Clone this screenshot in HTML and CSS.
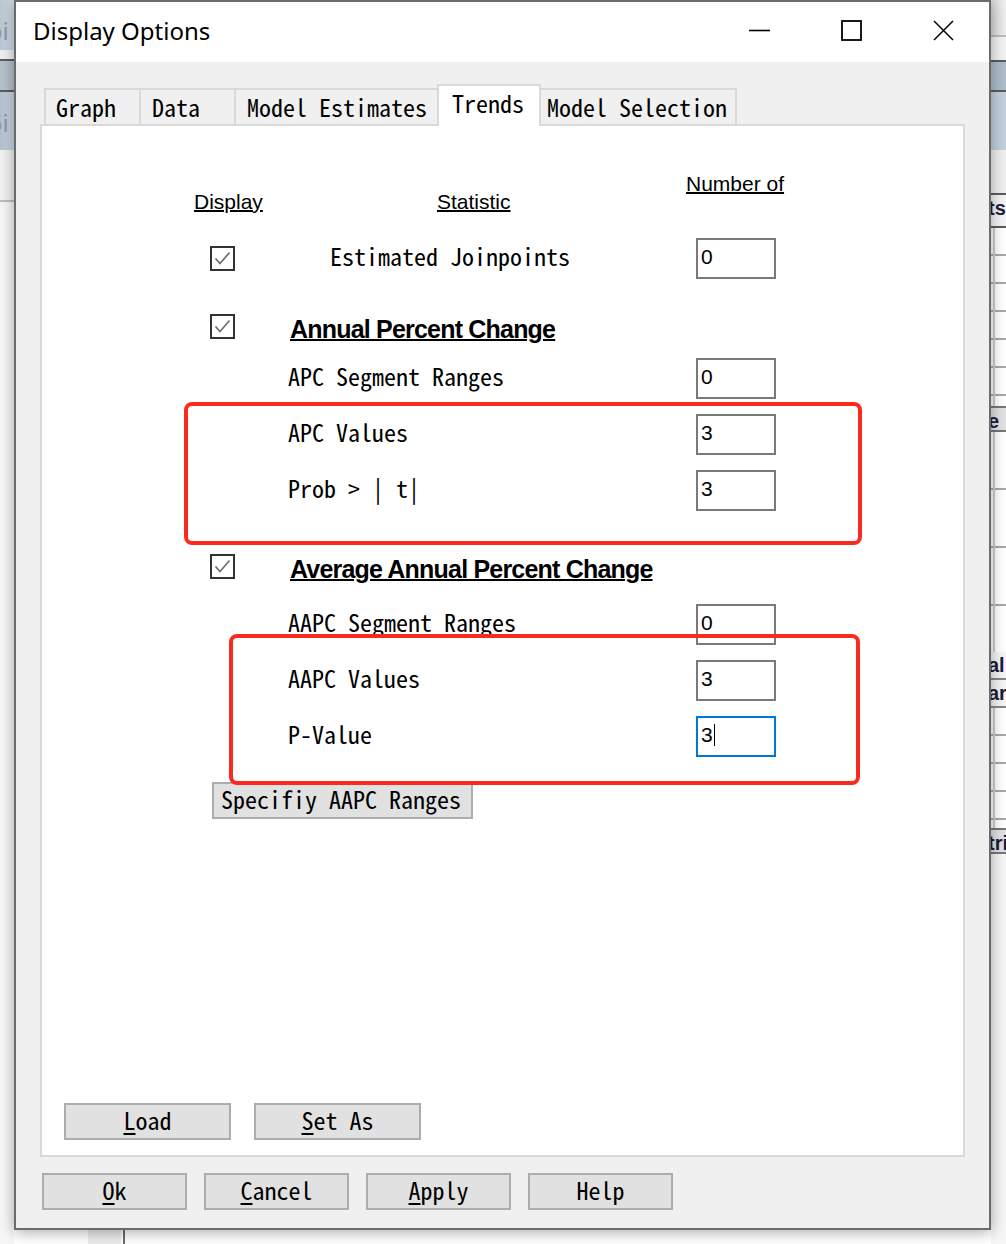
FILE: index.html
```html
<!DOCTYPE html>
<html lang="en">
<head>
    <meta charset="UTF-8">
    <meta name="viewport" content="width=device-width, initial-scale=1.0">
    <link rel="stylesheet" href="styles.css">
    <title>Display Options</title>
</head>
<body>
    <div class="desk">
        <div class="bg-left">
            <div class="strip sl1"><span class="frag">oi</span></div>
            <div class="strip sl2"></div>
            <div class="strip line"></div>
            <div class="strip sl3"></div>
            <div class="strip line"></div>
            <div class="strip sl4"><span class="frag">oi</span></div>
            <div class="strip sl5"></div>
            <div class="strip line-light"></div>
        </div>

        <div class="window">
            <div class="titlebar">
                <span class="title">Display Options</span>
                <div class="caption">
                    <span class="cap">
                        <svg width="21" height="21" viewBox="0 0 21 21"><path d="M0 10.5H21" stroke="#000" stroke-width="1.6"/></svg>
                    </span>
                    <span class="cap">
                        <svg width="21" height="21" viewBox="0 0 21 21"><rect x="1" y="1" width="19" height="19" fill="none" stroke="#000" stroke-width="1.8"/></svg>
                    </span>
                    <span class="cap">
                        <svg width="21" height="21" viewBox="0 0 21 21"><path d="M1 1L20 20M20 1L1 20" stroke="#000" stroke-width="1.5"/></svg>
                    </span>
                </div>
            </div>

            <div class="client">
                <div class="tabs">
                    <div class="tab tab-graph">Graph</div>
                    <div class="tab tab-data">Data</div>
                    <div class="tab tab-est">Model Estimates</div>
                    <div class="tab tab-trends active">Trends</div>
                    <div class="tab tab-sel">Model Selection</div>
                </div>

                <div class="panel">
                    <div class="form">
                        <div class="row head">
                            <span class="hdr">Display</span>
                            <span class="hdr hdr-stat">Statistic</span>
                            <span class="hdr hdr-num">Number of</span>
                        </div>

                        <div class="row first">
                            <span class="check"><svg width="25" height="25" viewBox="0 0 25 25"><rect x="1" y="1" width="23" height="23" fill="#fff" stroke="#333" stroke-width="2"/><path d="M5.5 12.5L10 17.5L19.5 6.5" fill="none" stroke="#6e6e6e" stroke-width="1.7"/></svg></span>
                            <span class="label label-indent">Estimated Joinpoints</span>
                            <span class="field">0</span>
                        </div>

                        <div class="row section">
                            <span class="check"><svg width="25" height="25" viewBox="0 0 25 25"><rect x="1" y="1" width="23" height="23" fill="#fff" stroke="#333" stroke-width="2"/><path d="M5.5 12.5L10 17.5L19.5 6.5" fill="none" stroke="#6e6e6e" stroke-width="1.7"/></svg></span>
                            <span class="sec-title">Annual Percent Change</span>
                        </div>
                        <div class="row after-sec">
                            <span class="label">APC Segment Ranges</span>
                            <span class="field">0</span>
                        </div>
                        <div class="row">
                            <span class="label">APC Values</span>
                            <span class="field">3</span>
                        </div>
                        <div class="row">
                            <span class="label">Prob &gt; | t|</span>
                            <span class="field">3</span>
                        </div>

                        <div class="row section section-aapc">
                            <span class="check"><svg width="25" height="25" viewBox="0 0 25 25"><rect x="1" y="1" width="23" height="23" fill="#fff" stroke="#333" stroke-width="2"/><path d="M5.5 12.5L10 17.5L19.5 6.5" fill="none" stroke="#6e6e6e" stroke-width="1.7"/></svg></span>
                            <span class="sec-title">Average Annual Percent Change</span>
                        </div>
                        <div class="row after-sec2">
                            <span class="label">AAPC Segment Ranges</span>
                            <span class="field">0</span>
                        </div>
                        <div class="row">
                            <span class="label">AAPC Values</span>
                            <span class="field">3</span>
                        </div>
                        <div class="row">
                            <span class="label">P-Value</span>
                            <span class="field focus">3<span class="caret"></span></span>
                        </div>

                        <div class="btn btn-specify">Specifiy AAPC Ranges</div>
                    </div>

                    <div class="panel-buttons">
                        <div class="btn btn-panel"><u>L</u>oad</div>
                        <div class="btn btn-panel"><u>S</u>et As</div>
                    </div>

                    <!-- red highlight boxes drawn over the form -->
                    <div class="mark mark-apc"></div>
                    <div class="mark mark-aapc"></div>
                </div>

                <div class="dialog-buttons">
                    <div class="btn btn-dlg"><u>O</u>k</div>
                    <div class="btn btn-dlg"><u>C</u>ancel</div>
                    <div class="btn btn-dlg"><u>A</u>pply</div>
                    <div class="btn btn-dlg">Help</div>
                </div>
            </div>
        </div>

        <div class="bg-right">
            <div class="strip sr1"></div>
            <div class="strip line-light"></div>
            <div class="strip sr2"></div>
            <div class="strip line"></div>
            <div class="strip sr3"></div>
            <div class="strip line"></div>
            <div class="strip sr4"></div>
            <div class="strip sr5"></div>
            <div class="strip line"></div>
            <div class="strip sr-bar"><span class="frag-dark">ts</span></div>
            <div class="strip line"></div>
            <div class="strip sr-grid"></div>
            <div class="strip sr-bar2"><span class="frag-dark">e</span></div>
            <div class="strip sr-grid2"></div>
            <div class="strip sr-bar3"><span class="frag-dark">al</span></div>
            <div class="strip sr-bar3"><span class="frag-dark">arr</span></div>
            <div class="strip sr-grid3"></div>
            <div class="strip sr-bar2"><span class="frag-dark">tri</span></div>
            <div class="strip sr-rest"></div>
        </div>

        <div class="bg-bottom">
            <div class="bb-block"></div>
            <div class="bb-line"></div>
        </div>
    </div>
</body>
</html>
```

FILE: styles.css
```css
* {
    box-sizing: border-box;
    margin: 0;
    padding: 0;
}
body {
    background: #fff;
    font-family: "Liberation Sans", Arial, sans-serif;
    color: #000;
}
.desk {
    width: 1006px;
    height: 1244px;
    display: grid;
    grid-template-columns: 14px 977px 15px;
    grid-template-rows: 1230px 14px;
    overflow: hidden;
}

/* desktop behind the dialog */
.bg-left {
    grid-column: 1;
    grid-row: 1 / 3;
    display: flex;
    flex-direction: column;
    background: #f7f7f7;
    overflow: hidden;
}
.bg-right {
    grid-column: 3;
    grid-row: 1 / 3;
    display: flex;
    flex-direction: column;
    background: #fafafa;
    overflow: hidden;
}
.strip {
    flex-shrink: 0;
    overflow: hidden;
    white-space: nowrap;
}
.line { height: 2px; background: #5c5c5c; }
.line-light { height: 2px; background: #bdbdbd; }
.sl1 { height: 50px; background: linear-gradient(90deg, #b9c7d5, #d3dde7); }
.sl2 { height: 9px; background: #eef1f4; }
.sl3 { height: 29px; background: #b5c1cd; }
.sl4 { height: 58px; background: linear-gradient(90deg, #b3c1cf, #ccd8e4); }
.sl5 { height: 50px; background: #f2f2f2; }
.frag {
    display: block;
    margin-left: -12px;
    padding-top: 14px;
    font-family: "Noto Sans", sans-serif;
    font-size: 24px;
    color: #8f9aa6;
}
.sr1 { height: 35px; background: linear-gradient(90deg, #d9d9d9, #efefef); }
.sr2 { height: 23px; background: #f3f3f3; }
.sr3 { height: 28px; background: #aebccb; }
.sr4 { height: 58px; background: #c3d0de; }
.sr5 { height: 43px; background: #efefef; }
.sr-bar { height: 31px; background: #f4f4f4; }
.sr-bar2 { height: 26px; background: #e2e2e2; border-top: 2px solid #777; border-bottom: 2px solid #777; }
.sr-bar3 { height: 28px; background: #f6f6f6; border-bottom: 2px solid #888; }
.frag-dark {
    display: block;
    margin-left: -3px;
    font-size: 20px;
    font-weight: bold;
    color: #1d1d3a;
    line-height: 26px;
}
.sr-grid {
    height: 178px;
    background:
        linear-gradient(90deg, transparent 2px, #cfcfcf 2px, #cfcfcf 4px, transparent 4px),
        repeating-linear-gradient(180deg, #fff 0, #fff 26px, #a9a9a9 26px, #a9a9a9 28px);
}
.sr-grid2 {
    height: 220px;
    background:
        linear-gradient(90deg, transparent 2px, #cfcfcf 2px, #cfcfcf 4px, transparent 4px),
        repeating-linear-gradient(180deg, #fff 0, #fff 56px, #a9a9a9 56px, #a9a9a9 58px);
}
.sr-grid3 {
    height: 120px;
    background:
        linear-gradient(90deg, transparent 2px, #cfcfcf 2px, #cfcfcf 4px, transparent 4px),
        repeating-linear-gradient(180deg, #fff 0, #fff 26px, #a9a9a9 26px, #a9a9a9 28px);
}
.sr-rest { flex: 1; background: #f6f6f6; }

.bg-bottom {
    grid-column: 2;
    grid-row: 2;
    display: flex;
    padding-left: 74px;
}
.bb-block { width: 33px; background: #ececec; }
.bb-line { width: 2px; margin-left: 2px; background: #6d6d6d; }

/* dialog window */
.window {
    grid-column: 2;
    grid-row: 1;
    border: 2px solid #6b6b6b;
    display: flex;
    flex-direction: column;
    position: relative;
    z-index: 1;
    box-shadow: 0 2px 14px rgba(0, 0, 0, 0.35);
}
.titlebar {
    height: 60px;
    flex-shrink: 0;
    background: #fff;
    display: flex;
    align-items: center;
    padding-left: 17px;
}
.title {
    flex: 1;
    margin-top: -3px;
    font-family: "Noto Sans", "Open Sans", sans-serif;
    font-size: 24px;
    color: #000;
}
.caption {
    display: flex;
    align-self: stretch;
}
.cap {
    width: 92px;
    padding-bottom: 4px;
    display: flex;
    align-items: center;
    justify-content: center;
}

.client {
    flex: 1;
    background: #f0f0f0;
    padding: 22px 24px 18px;
    display: flex;
    flex-direction: column;
}

/* tabs */
.tabs {
    height: 40px;
    margin-left: 4px;
    display: flex;
    align-items: flex-end;
}
.tab {
    height: 36px;
    margin-right: -2px;
    padding-left: 10px;
    border: 2px solid #d9d9d9;
    border-bottom: 0;
    background: #f0f0f0;
    font-family: "Noto Sans Mono CJK SC", "Liberation Mono", monospace;
    font-size: 24px;
    line-height: 34px;
    white-space: nowrap;
}
.tab-graph { width: 97px; }
.tab-data { width: 97px; padding-left: 11px; }
.tab-est { width: 205px; padding-left: 11px; }
.tab-trends { width: 104px; padding-left: 13px; }
.tab-sel { width: 198px; padding-left: 6px; }
.tab.active {
    height: 42px;
    margin-bottom: -2px;
    background: #fff;
    position: relative;
    z-index: 2;
}

.panel {
    flex: 1;
    background: #fff;
    border: 2px solid #d9d9d9;
    display: flex;
    flex-direction: column;
    position: relative;
}

/* form rows: display / statistic / number */
.form {
    margin-left: 152px;
}
.row {
    height: 41px;
    margin-top: 15px;
    display: grid;
    grid-template-columns: 94px 398px 98px;
    align-items: center;
}
.row.head {
    height: 44px;
    margin-top: 45px;
    align-items: end;
}
.row.first { margin-top: 23px; }
.row.section { margin-top: 27px; }
.row.after-sec { margin-top: 11px; }
.row.section-aapc { margin-top: 35px; }
.row.after-sec2 { margin-top: 17px; }

.hdr {
    margin-bottom: 1px;
    font-size: 21px;
    line-height: 24px;
    text-decoration: underline;
    text-decoration-thickness: 2px;
    color: #000;
    white-space: nowrap;
}
.hdr-stat { padding-left: 149px; }
.hdr-num { align-self: start; margin-top: 1px; }

.check {
    display: flex;
    margin-left: 16px;
}
.label {
    grid-column: 2;
    padding-bottom: 6px;
    font-family: "Noto Sans Mono CJK SC", "Liberation Mono", monospace;
    font-size: 24px;
    white-space: pre;
}
.label-indent { padding-left: 42px; }
.sec-title {
    grid-column: 2;
    padding: 6px 0 0 2px;
    font-size: 25px;
    font-weight: bold;
    letter-spacing: -0.8px;
    text-decoration: underline;
    text-decoration-thickness: 2px;
    white-space: nowrap;
}
.field {
    grid-column: 3;
    width: 80px;
    height: 41px;
    margin-left: 10px;
    padding: 0 0 4px 3px;
    border: 2px solid #7a7a7a;
    background: #fff;
    font-size: 21px;
    line-height: 35px;
    display: flex;
    align-items: center;
}
.field.focus { border-color: #0078d7; }
.caret {
    width: 1px;
    height: 22px;
    margin-left: 1px;
    background: #000;
}

/* buttons */
.btn {
    height: 37px;
    background: #e1e1e1;
    border: 2px solid #adadad;
    font-family: "Noto Sans Mono CJK SC", "Liberation Mono", monospace;
    font-size: 24px;
    line-height: 30px;
    text-align: center;
    white-space: pre;
}
.btn u { text-underline-offset: 3px; }
.btn-specify {
    width: 261px;
    margin: 25px 0 0 18px;
    padding-left: 7px;
    text-align: left;
}
.panel-buttons {
    margin-top: auto;
    padding: 0 0 15px 22px;
    display: flex;
    gap: 23px;
}
.btn-panel { width: 167px; }
.dialog-buttons {
    margin-top: 16px;
    padding-left: 2px;
    display: flex;
    gap: 17px;
}
.btn-dlg { width: 145px; }

/* red highlight marks */
.mark {
    position: absolute;
    border: 4px solid #fb2a1e;
    border-radius: 8px;
}
.mark-apc {
    left: 142px;
    top: 276px;
    width: 678px;
    height: 143px;
}
.mark-aapc {
    left: 187px;
    top: 508px;
    width: 631px;
    height: 151px;
}
```
